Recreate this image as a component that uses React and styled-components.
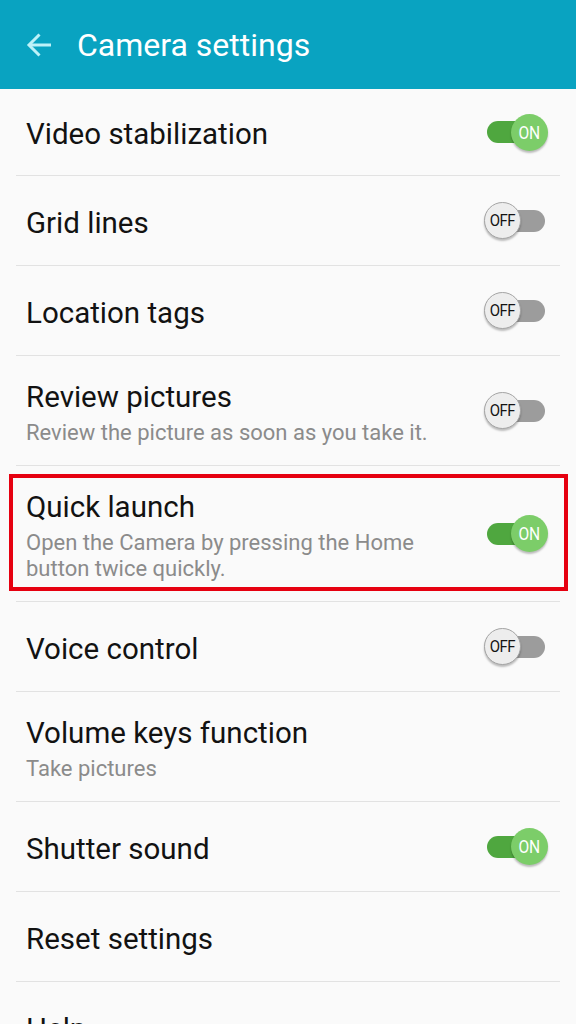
import React from "react";
import styled, { createGlobalStyle } from "styled-components";

const Global = createGlobalStyle`
  html, body { margin: 0; padding: 0; }
  body {
    background: #fafafa;
    font-family: Roboto, "Noto Sans", "Liberation Sans", sans-serif;
    overflow: hidden;
  }
  #root { height: 1024px; overflow: hidden; }
`;

const Screen = styled.div`
  width: 576px;
  height: 1024px;
  background: #fafafa;
  display: flex;
  flex-direction: column;
  overflow: hidden;
`;

const AppBar = styled.header`
  flex: 0 0 89px;
  height: 89px;
  background: #09a3c1;
  display: flex;
  align-items: center;
  padding-left: 26px;
  gap: 25px;
  box-sizing: border-box;
`;

const BackButton = styled.button`
  border: 0;
  background: none;
  padding: 0;
  width: 26px;
  height: 24px;
  display: flex;
  align-items: center;
  justify-content: center;
  cursor: pointer;
`;

const Title = styled.h1`
  margin: 0;
  font-size: 32px;
  font-weight: 400;
  color: #ffffff;
  line-height: 38px;
  padding-top: 1px;
`;

const List = styled.ul`
  list-style: none;
  margin: 0;
  padding: 0;
`;

const Item = styled.li`
  position: relative;
  margin: 0 16px;
  padding: 0 12px 0 10px;
  min-height: 89px;
  border-bottom: 1px solid #e2e2e2;
  display: flex;
  align-items: center;
  gap: 20px;
  &:first-child { min-height: 86px; }
`;

const TextBlock = styled.div`
  flex: 1;
  padding: 23px 0 19px;
  min-width: 0;
`;

const Label = styled.div`
  font-size: 29.5px;
  line-height: 36px;
  color: #121212;
`;

const Sub = styled.div`
  margin-top: 5px;
  font-size: 22px;
  line-height: 26px;
  color: #8b8b8b;
`;

const Switch = styled.div`
  position: relative;
  flex: 0 0 64px;
  width: 64px;
  height: 37px;
`;

const Track = styled.div`
  position: absolute;
  left: 3px;
  right: 3px;
  top: 50%;
  height: 22px;
  margin-top: -11px;
  border-radius: 11px;
  background: ${(p) => (p.$on ? "#4fa73f" : "#9c9c9c")};
`;

const Thumb = styled.div`
  position: absolute;
  top: 0;
  ${(p) => (p.$on ? "right: 0;" : "left: 0;")}
  width: 37px;
  height: 37px;
  box-sizing: border-box;
  border-radius: 50%;
  background: ${(p) => (p.$on ? "#7ccd69" : "#ededed")};
  border: ${(p) => (p.$on ? "none" : "1px solid #a4a4a4")};
  box-shadow: 0 2px 2px rgba(0, 0, 0, 0.25);
  display: flex;
  align-items: center;
  justify-content: center;
`;

const ThumbText = styled.span`
  display: inline-block;
  font-size: ${(p) => (p.$on ? "19px" : "17px")};
  letter-spacing: ${(p) => (p.$on ? "0" : "-0.6px")};
  color: ${(p) => (p.$on ? "#ffffff" : "#141414")};
  transform: scaleX(${(p) => (p.$on ? 0.82 : 0.88)});
  line-height: 1;
`;

const Highlight = styled.div`
  position: absolute;
  left: -7px;
  right: -8px;
  top: 8px;
  bottom: 10px;
  border: 4px solid #e60010;
  pointer-events: none;
`;

const Toggle = ({ on }) => (
  <Switch>
    <Track $on={on} />
    <Thumb $on={on}>
      <ThumbText $on={on}>{on ? "ON" : "OFF"}</ThumbText>
    </Thumb>
  </Switch>
);

const items = [
  { label: "Video stabilization", on: true },
  { label: "Grid lines", on: false },
  { label: "Location tags", on: false },
  { label: "Review pictures", sub: "Review the picture as soon as you take it.", on: false },
  {
    label: "Quick launch",
    sub: "Open the Camera by pressing the Home button twice quickly.",
    on: true,
    highlight: true,
  },
  { label: "Voice control", on: false },
  { label: "Volume keys function", sub: "Take pictures" },
  { label: "Shutter sound", on: true },
  { label: "Reset settings" },
  { label: "Help" },
];

export default function App() {
  return (
    <>
      <Global />
      <Screen>
        <AppBar>
          <BackButton aria-label="Back">
            <svg width="26" height="24" viewBox="0 0 26 24" fill="none">
              <path d="M25 12H3" stroke="#bdf1f8" strokeWidth="3" />
              <path d="M13.5 1.5L3 12l10.5 10.5" stroke="#bdf1f8" strokeWidth="3" />
            </svg>
          </BackButton>
          <Title>Camera settings</Title>
        </AppBar>
        <List>
          {items.map((it) => (
            <Item key={it.label}>
              <TextBlock>
                <Label>{it.label}</Label>
                {it.sub && <Sub>{it.sub}</Sub>}
              </TextBlock>
              {typeof it.on === "boolean" && <Toggle on={it.on} />}
              {it.highlight && <Highlight />}
            </Item>
          ))}
        </List>
      </Screen>
    </>
  );
}
